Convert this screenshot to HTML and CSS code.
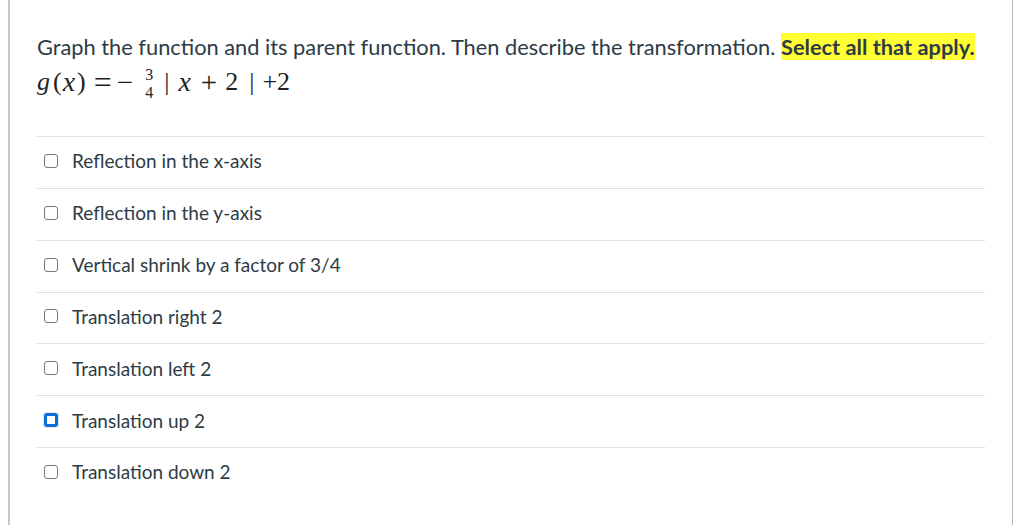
FILE: index.html
```html
<!DOCTYPE html>
<html>
<head>
<meta charset="utf-8">
<link rel="stylesheet" href="styles.css">
</head>
<body>
<div class="question">
  <div class="question-text">
    <p class="prompt">Graph the function and its parent function. Then describe the transformation. <span class="hl">Select all that apply.</span></p>
    <p class="math"><span class="mi g">g</span><span class="mo lp">(</span><span class="mi x">x</span><span class="mo">)</span><span class="rel">=</span><span class="mo minus">−</span><span class="frac"><span class="num">3</span><span class="den">4</span></span><span class="bar">|</span><span class="mi x">x</span><span class="bin">+</span><span class="mn">2</span><span class="bar">|</span><span class="mo">+2</span></p>
  </div>
  <div class="answers">
    <label class="answer"><span class="box"></span><span class="label">Reflection in the x-axis</span></label>
    <label class="answer"><span class="box"></span><span class="label">Reflection in the y-axis</span></label>
    <label class="answer"><span class="box"></span><span class="label">Vertical shrink by a factor of 3/4</span></label>
    <label class="answer"><span class="box"></span><span class="label">Translation right 2</span></label>
    <label class="answer"><span class="box"></span><span class="label">Translation left 2</span></label>
    <label class="answer"><span class="box focus"></span><span class="label">Translation up 2</span></label>
    <label class="answer"><span class="box"></span><span class="label">Translation down 2</span></label>
  </div>
</div>
</body>
</html>
```

FILE: styles.css
```css
html, body {
  margin: 0;
  padding: 0;
  background: #ffffff;
}
body {
  font-family: Lato, "Noto Sans", sans-serif;
  color: #2d3b45;
}
.question {
  margin-left: 8px;
  width: 1005px;
  min-height: 525px;
  box-sizing: border-box;
  border-left: 2px solid #c4c8cb;
  border-right: 1px solid #b4b8bb;
  padding: 32px 27px 0 27px;
}
.prompt {
  margin: 0;
  font-size: 21.8px;
  line-height: 30px;
}
.hl {
  background: #ffff33;
  font-weight: bold;
}
.math {
  margin: 2px 0 0 0;
  height: 36px;
  display: flex;
  align-items: center;
  font-family: "Liberation Serif", "DejaVu Serif", serif;
  font-size: 26px;
  color: #1f1f1f;
}
.mi { font-style: italic; }
.mi.x { margin: 0 2px 0 1px; font-size: 28px; }
.lp { margin-left: 3px; }
.rel { margin: 0 5px 0 8px; font-size: 32px; }
.bin { margin: 0 8px; font-size: 29px; }
.minus { font-size: 29px; }
.bar { margin: 0 8px 0 11px; font-style: normal; }
.frac {
  display: inline-flex;
  flex-direction: column;
  align-items: center;
  font-size: 16px;
  line-height: 18px;
  margin: 4px 0 0 12px;
}
.num, .den { display: block; }
.answers {
  margin-top: 36px;
}
.answer {
  display: flex;
  align-items: center;
  padding-bottom: 3px;
  box-sizing: border-box;
  height: 51.85px;
  border-top: 1px solid #dde0e2;
}
.box {
  width: 14px;
  height: 14px;
  box-sizing: border-box;
  border: 1px solid #6f7a82;
  border-radius: 3px;
  margin-left: 7px;
  margin-right: 14px;
}
.box.focus {
  border: 3px solid #0b6fd8;
  box-shadow: 0 0 0 1px #dbe7f5;
}
.label {
  font-size: 19px;
}
```
